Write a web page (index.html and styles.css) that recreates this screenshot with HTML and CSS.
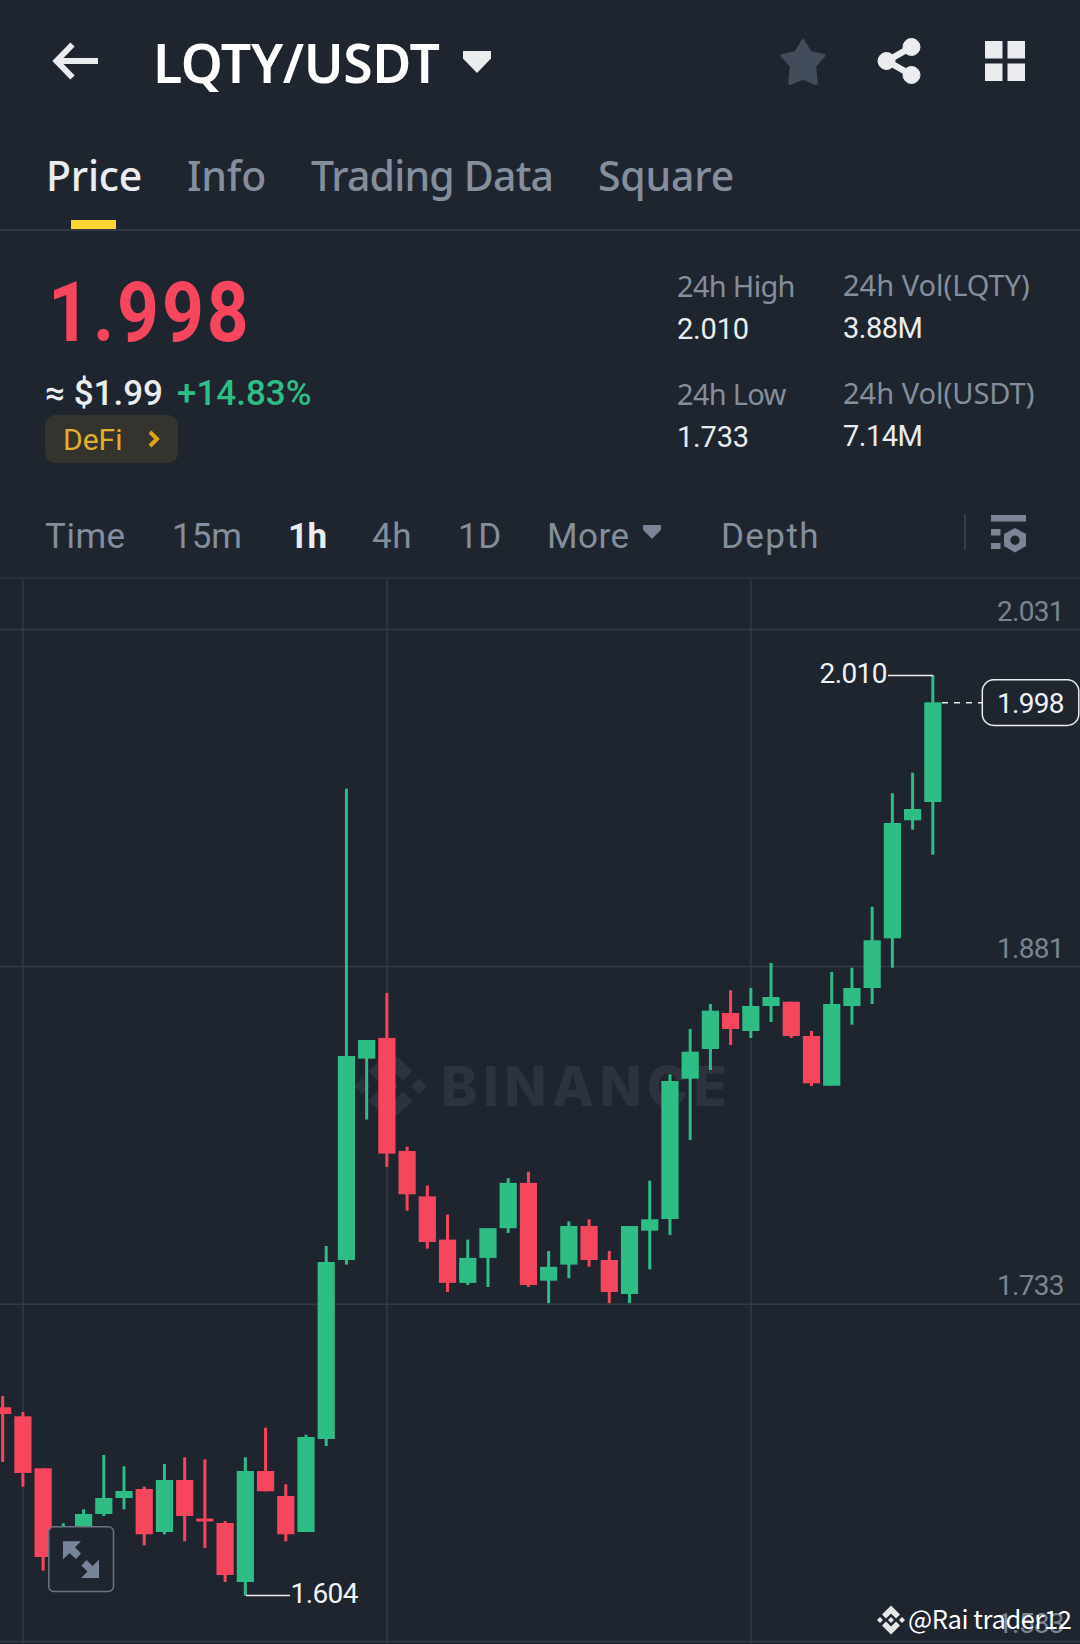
FILE: index.html
```html
<!DOCTYPE html>
<html lang="en">
<head>
<meta charset="utf-8">
<title>LQTY/USDT</title>
<link rel="stylesheet" href="styles.css">
</head>
<body>
<header class="topbar">
  <svg class="back" width="46" height="38" viewBox="0 0 46 38"><path d="M46 19H6M20.500 2.500L4.500 19L20.500 35.500" fill="none" stroke="#eaecef" stroke-width="6"/></svg>
  <h1 class="pair">LQTY/USDT</h1>
  <svg class="caret" width="28" height="22" viewBox="0 0 28 22"><path d="M0 0H28V7.500L14 22L0 7.500Z" fill="#eaecef"/></svg>
  <nav class="actions">
    <svg width="46" height="48" viewBox="0 0 46 48"><path d="M23 2.500L30.200 14.500L44 17.500L34.700 28L36.200 45.500L23 40L9.800 45.500L11.300 28L2 17.500L15.800 14.500Z" fill="#434c5a" stroke="#434c5a" stroke-width="3" stroke-linejoin="round"/></svg>
    <svg width="44" height="48" viewBox="0 0 44 48"><g fill="#eaecef" stroke="#eaecef"><path d="M34.500 10L10 24L34.500 38" fill="none" stroke-width="6.500"/><circle cx="34.500" cy="10" r="8.500"/><circle cx="9.500" cy="24" r="8.500"/><circle cx="34.500" cy="38" r="8.500"/></g></svg>
    <svg width="40" height="40" viewBox="0 0 40 40"><path d="M0 0H17.500V17.500H0ZM22.500 0H40V17.500H22.500ZM0 22.500H17.500V40H0ZM22.500 22.500H40V40H22.500Z" fill="#eaecef"/></svg>
  </nav>
</header>
<nav class="tabs">
  <span class="tab tab-price active">Price</span>
  <span class="tab tab-info">Info</span>
  <span class="tab tab-data">Trading Data</span>
  <span class="tab tab-square">Square</span>
</nav>
<section class="summary">
  <div class="quote">
    <div class="last">1.998</div>
    <div class="fiat"><span class="usd">≈ $1.99</span><span class="change">+14.83%</span></div>
    <div class="tag"><span>DeFi</span><svg width="12" height="18" viewBox="0 0 12 18"><path d="M2 2L9 9L2 16" fill="none" stroke="#dba51a" stroke-width="4"/></svg></div>
  </div>
  <dl class="stats stats-price">
    <dt class="k-high">24h High</dt><dd class="num">2.010</dd>
    <dt class="k-low">24h Low</dt><dd class="num">1.733</dd>
  </dl>
  <dl class="stats stats-volume">
    <dt class="k-base">24h Vol(LQTY)</dt><dd class="vol">3.88M</dd>
    <dt class="k-quote">24h Vol(USDT)</dt><dd class="vol">7.14M</dd>
  </dl>
</section>
<nav class="intervals">
  <span class="i-time">Time</span>
  <span class="i-15m">15m</span>
  <span class="i-1h active">1h</span>
  <span class="i-4h">4h</span>
  <span class="i-1d">1D</span>
  <span class="i-more">More</span>
  <svg class="more-caret" width="18" height="14" viewBox="0 0 28 22"><path d="M0 0H28V7.500L14 22L0 7.500Z" fill="#7b8596"/></svg>
  <span class="i-depth">Depth</span>
  <i class="divider"></i>
  <svg class="settings" width="35" height="38" viewBox="0 0 35 38"><path d="M0 0H35V6.500H0ZM0 14H9.500V20.500H0ZM0 28H9.500V34H0ZM24 13L35 19V31L24 37.500L13 31V19ZM24 20.500A4.700 4.700 0 1 0 24 29.900A4.700 4.700 0 1 0 24 20.500Z" fill="#7b8596" fill-rule="evenodd"/></svg>
</nav>
<main class="chart">
  <svg width="1080" height="1067" viewBox="0 577 1080 1067">
    <path class="grid" d="M0 629.500H1080M0 966.500H1080M0 1304.300H1080M0 1641.600H1080M22.900 579V1644M387 579V1644M750.900 579V1644"/>
    <g class="brand">
      <path d="M368 1071L390.500 1051L412.500 1071L403 1080.500L390.500 1068.500L377.500 1080.500ZM368 1101L377.500 1091.500L390.500 1103.500L403 1091.500L412.500 1101L390.500 1121ZM354 1086L362 1078L370 1086L362 1094ZM411 1086L419 1078L427 1086L419 1094ZM382.500 1086L390.500 1078L398.500 1086L390.500 1094Z"/>
      <text x="441" y="1106.400" textLength="286">BINANCE</text>
    </g>
    <g id="candles"></g>
    <path class="marker" d="M888 675.500H933M246 1595.500H290"/>
    <path class="marker" d="M942 702.700H982" stroke-dasharray="6 6"/>
    <rect class="marker" x="982.300" y="679.800" width="96.500" height="45.600" rx="11.500"/>
    <g class="axis">
      <text x="997" y="621" textLength="67.500">2.031</text>
      <text x="997" y="958" textLength="67.500">1.881</text>
      <text x="997" y="1294.700" textLength="67.500">1.733</text>
      <text x="997" y="1633" textLength="67.500">1.583</text>
    </g>
    <g class="callout">
      <text x="819.500" y="683" textLength="68">2.010</text>
      <text x="997" y="713" textLength="67.500">1.998</text>
      <text x="290.500" y="1602.700" textLength="68">1.604</text>
    </g>
    <g>
      <rect x="48.800" y="1526.800" width="64.700" height="64.700" rx="5" fill="#1f252f" stroke="#6b7484" stroke-width="1.500"/>
      <path d="M63 1541.300H81L75 1547.300L81 1553.600L76 1559L69.500 1553L63 1559.500ZM99 1578H81L87.500 1571.500L81.500 1565.500L86.500 1560L92.500 1566L99 1559.500Z" fill="#78849a"/>
    </g>
    <g class="credit">
      <path d="M882 1614.500L891 1605.500L900 1614.500L896 1618.500L891 1613.500L886 1618.500ZM882 1625.500L886 1621.500L891 1626.500L896 1621.500L900 1625.500L891 1634.500ZM877 1620L880 1617L883 1620L880 1623ZM899 1620L902 1617L905 1620L902 1623ZM888 1620L891 1617L894 1620L891 1623Z"/>
      <text x="908" y="1629" textLength="164">@Rai trader12</text>
    </g>
  </svg>
</main>
<script src="chart.js"></script>
</body>
</html>
```
FILE: styles.css
```css
* { box-sizing: border-box; }

body {
  margin: 0;
  width: 1080px;
  height: 1644px;
  overflow: hidden;
  background: #1f252f;
  color: #eaecef;
  font-family: Roboto, "Liberation Sans", sans-serif;
}

svg { display: block; flex: none; }

.topbar {
  display: flex;
  align-items: center;
  height: 122px;
  padding-left: 52px;
}

.pair {
  width: 308px;
  margin: 0 0 0 55px;
  padding-top: 3px;
  font-family: "Noto Sans", sans-serif;
  font-size: 53.500px;
  font-weight: 600;
  line-height: 64px;
  letter-spacing: -0.400px;
  white-space: nowrap;
  color: #fff;
}

.caret { margin: 2px 0 0 2px; }

.actions {
  display: flex;
  align-items: center;
  margin-left: 289px;
}

.actions svg:nth-child(1) { margin-top: 2px; }
.actions svg:nth-child(2) { margin-left: 51px; }
.actions svg:nth-child(3) { margin-left: 64px; }

.tabs {
  display: flex;
  height: 109px;
  padding: 25px 0 0 46px;
  border-bottom: 2px solid #323945;
}

.tab {
  position: relative;
  font-family: "Noto Sans", sans-serif;
  font-size: 41px;
  font-weight: 500;
  line-height: 56px;
  letter-spacing: -0.200px;
  white-space: nowrap;
  color: #848e9c;
}

.tab-price { width: 141px; }
.tab-info { width: 124px; }
.tab-data { width: 287px; letter-spacing: -0.800px; }

.tab.active { color: #eaecef; }

.tab.active::after {
  content: "";
  position: absolute;
  left: 25px;
  top: 73px;
  width: 45px;
  height: 9px;
  background: #fcd535;
}

.summary {
  display: flex;
  height: 256px;
}

.quote { width: 677px; padding: 36px 0 0 45px; }

.last {
  width: 240px;
  height: 92px;
  margin-left: 3px;
  font-size: 84px;
  font-weight: 700;
  line-height: 92px;
  letter-spacing: 3.400px;
  transform: scaleX(0.87);
  transform-origin: left;
  color: #f6465d;
}

.fiat {
  display: flex;
  height: 56px;
  font-size: 35px;
  font-weight: 500;
  line-height: 70px;
  white-space: nowrap;
}

.usd { width: 132px; }
.change { color: #2ebd85; }

.tag {
  display: flex;
  align-items: center;
  justify-content: space-between;
  width: 133px;
  height: 48px;
  padding: 0 18px 0 18px;
  border-radius: 10px;
  background: #35332d;
  color: #e0b02e;
  font-size: 30px;
}

.stats {
  margin: 0;
  width: 166px;
  padding-top: 35px;
  font-size: 29px;
  white-space: nowrap;
}

.stats-volume { width: 230px; padding-top: 34px; }
.stats dt { height: 39px; line-height: 40px; color: #848e9c; font-family: "Noto Sans", sans-serif; font-size: 29px; }
.stats-price dt { letter-spacing: -0.700px; }
.stats dd { height: 69px; margin: 0; line-height: 48px; }
.stats .num { letter-spacing: -0.200px; }
.stats .vol { letter-spacing: -0.500px; }

.intervals {
  display: flex;
  height: 92px;
  padding: 23px 0 0 45px;
  border-bottom: 2px solid #29303a;
  font-size: 35px;
  line-height: 54px;
  letter-spacing: 0.500px;
  white-space: nowrap;
  color: #848e9c;
}

.intervals .active { color: #eaecef; font-weight: 700; letter-spacing: -0.700px; }
.i-time { width: 127px; }
.i-15m { width: 116px; letter-spacing: 0; }
.i-1h { width: 84px; }
.i-4h { width: 86px; }
.i-1d { width: 89px; }
.i-more { width: 96px; }
.more-caret { margin: 15px 60px 0 0; }
.i-depth { width: 243px; letter-spacing: 1.400px; }
.divider { width: 2px; height: 36px; margin: 4px 25px 0 0; background: #373e4a; }
.settings { margin-top: 5px; }

.chart { height: 1067px; margin-top: -2px; }

.grid { fill: none; stroke: #343a45; stroke-width: 1.500px; }
.brand { fill: #2d333e; }
.brand text { font-family: Inter, sans-serif; font-size: 55px; font-weight: 800; }
.marker { fill: none; stroke: #eaecef; stroke-width: 1.500px; }
.axis { fill: #7b8492; font-size: 28px; }
.callout { fill: #f0f2f5; font-size: 28px; }
.credit { fill: #e6e6e6; }
.credit text { fill: #fff; font-family: "Noto Sans CJK SC", sans-serif; font-size: 25.500px; font-weight: 400; }
.up { fill: #2ebd85; }
.down { fill: #f6465d; }
```
FILE: chart.js
```js
// Each candle: direction, high, body top, body bottom, low (chart y coordinates).
const candles = [
  ["down", 1396, 1407.3, 1414, 1462],
  ["down", 1412, 1416.3, 1473, 1486.7],
  ["down", 1468.3, 1468.3, 1557, 1570.7],
  ["up", 1523.3, 1530, 1555, 1560],
  ["up", 1509.3, 1514, 1540, 1545],
  ["up", 1455, 1498, 1514, 1516],
  ["up", 1466.3, 1491, 1498, 1509.3],
  ["down", 1486.7, 1489, 1534.3, 1545.3],
  ["up", 1464, 1480, 1532, 1534.3],
  ["down", 1457.3, 1480, 1516, 1541.3],
  ["down", 1459.3, 1518.5, 1521.5, 1548],
  ["down", 1521, 1523, 1575, 1582],
  ["up", 1457.3, 1471, 1582, 1595.7],
  ["down", 1427.7, 1471, 1491.3, 1491.3],
  ["down", 1484.3, 1496, 1534.3, 1541.3],
  ["up", 1434.7, 1437, 1532, 1532],
  ["up", 1246, 1262, 1439, 1446],
  ["up", 788.6, 1056, 1260, 1264.6],
  ["up", 1040, 1040, 1058.6, 1119.6],
  ["down", 992.9, 1037.9, 1153.6, 1167],
  ["down", 1146.8, 1151, 1194.3, 1210.7],
  ["down", 1185.4, 1196.4, 1242, 1248.6],
  ["down", 1214.6, 1239.6, 1282.9, 1292],
  ["up", 1239.6, 1257.9, 1282.9, 1285],
  ["up", 1228.2, 1228.2, 1257.9, 1287],
  ["up", 1178.2, 1182.9, 1228.2, 1232.9],
  ["down", 1171.8, 1182.9, 1285, 1287],
  ["up", 1251, 1266.8, 1280.7, 1303.2],
  ["up", 1221.4, 1226, 1264.6, 1278.2],
  ["down", 1219.3, 1226, 1260, 1266.8],
  ["down", 1251, 1260, 1292, 1303.2],
  ["up", 1226, 1226, 1294, 1303.2],
  ["up", 1180.7, 1219.3, 1230.7, 1269.3],
  ["up", 1074.3, 1081, 1219, 1235],
  ["up", 1029, 1051.7, 1078.7, 1140],
  ["up", 1004, 1010.7, 1049, 1070],
  ["down", 990.3, 1013, 1029, 1045],
  ["up", 988, 1006, 1031, 1038],
  ["up", 963, 997, 1006, 1022],
  ["down", 1001.7, 1001.7, 1036, 1038],
  ["down", 1031, 1036, 1083.3, 1086],
  ["up", 972, 1004, 1085.7, 1085.7],
  ["up", 967.7, 988, 1006, 1024.7],
  ["up", 906.7, 940.3, 988, 1004],
  ["up", 793.3, 823, 938.3, 967.7],
  ["up", 772.7, 809, 820.3, 829.7],
  ["up", 675, 702.3, 802, 854.7]
];
const group = document.getElementById("candles");
const addRect = (cls, x, y, w, h) => {
  const r = document.createElementNS("http://www.w3.org/2000/svg", "rect");
  for (const [k, v] of Object.entries({ class: cls, x, y, width: w, height: h })) r.setAttribute(k, v);
  group.appendChild(r);
};
candles.forEach(([dir, high, top, bottom, low], i) => {
  const cx = 2.7 + i * 20.22;
  addRect(dir, cx - 1.5, high, 3, low - high);
  addRect(dir, cx - 8.6, top, 17.2, bottom - top);
});
```
